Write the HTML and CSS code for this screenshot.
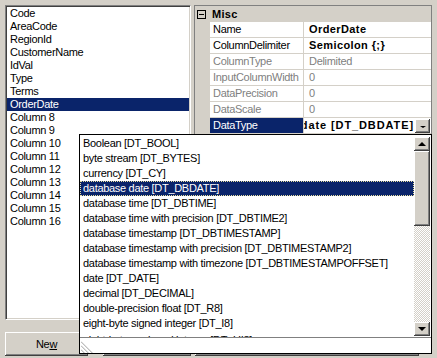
FILE: index.html
```html
<!DOCTYPE html>
<html lang="en">
<head>
    <meta charset="UTF-8">
    <title>Column Properties</title>
    <link rel="stylesheet" href="styles.css">
</head>
<body>
    <div class="dialog">
        <div class="panes">
            <ul class="listbox">
                <li>Code</li>
                <li>AreaCode</li>
                <li>RegionId</li>
                <li>CustomerName</li>
                <li>IdVal</li>
                <li>Type</li>
                <li>Terms</li>
                <li class="selected">OrderDate</li>
                <li>Column 8</li>
                <li>Column 9</li>
                <li>Column 10</li>
                <li>Column 11</li>
                <li>Column 12</li>
                <li>Column 13</li>
                <li>Column 14</li>
                <li>Column 15</li>
                <li>Column 16</li>
            </ul>

            <div class="grid">
                <div class="category">
                    <span class="toggle"></span>
                    <span class="category-name">Misc</span>
                </div>
                <div class="prop">
                    <div class="prop-name">Name</div>
                    <div class="prop-value bold">OrderDate</div>
                </div>
                <div class="prop">
                    <div class="prop-name">ColumnDelimiter</div>
                    <div class="prop-value bold">Semicolon {;}</div>
                </div>
                <div class="prop readonly">
                    <div class="prop-name">ColumnType</div>
                    <div class="prop-value">Delimited</div>
                </div>
                <div class="prop readonly">
                    <div class="prop-name">InputColumnWidth</div>
                    <div class="prop-value">0</div>
                </div>
                <div class="prop readonly">
                    <div class="prop-name">DataPrecision</div>
                    <div class="prop-value">0</div>
                </div>
                <div class="prop readonly">
                    <div class="prop-name">DataScale</div>
                    <div class="prop-value">0</div>
                </div>
                <div class="prop active">
                    <div class="prop-name">DataType</div>
                    <div class="prop-value bold editor">
                        <span class="editor-text">database date [DT_DBDATE]</span>
                        <span class="combo-btn"><i class="arrow-down small"></i></span>
                    </div>
                </div>
            </div>
        </div>

        <div class="buttons">
            <button class="btn btn-new">Ne<u>w</u></button>
            <button class="btn btn-remove"></button>
            <button class="btn btn-wide"></button>
        </div>

        <!-- lista desplegable del tipo de dato -->
        <div class="dropdown">
            <div class="dropdown-body">
                <ul class="dropdown-list">
                    <li>Boolean [DT_BOOL]</li>
                    <li>byte stream [DT_BYTES]</li>
                    <li>currency [DT_CY]</li>
                    <li class="selected">database date [DT_DBDATE]</li>
                    <li>database time [DT_DBTIME]</li>
                    <li>database time with precision [DT_DBTIME2]</li>
                    <li>database timestamp [DT_DBTIMESTAMP]</li>
                    <li>database timestamp with precision [DT_DBTIMESTAMP2]</li>
                    <li>database timestamp with timezone [DT_DBTIMESTAMPOFFSET]</li>
                    <li>date [DT_DATE]</li>
                    <li>decimal [DT_DECIMAL]</li>
                    <li>double-precision float [DT_R8]</li>
                    <li>eight-byte signed integer [DT_I8]</li>
                    <li class="partial">eight-byte unsigned integer [DT_UI8]</li>
                </ul>
                <div class="scrollbar">
                    <span class="sb-btn"><i class="arrow-up"></i></span>
                    <span class="sb-thumb"></span>
                    <span class="sb-track"></span>
                    <span class="sb-btn"><i class="arrow-down"></i></span>
                </div>
            </div>
            <div class="dropdown-footer">
                <svg class="grip" width="14" height="14" viewBox="0 0 14 14">
                    <path d="M0 2.5 L11.5 14 M0 6.5 L7.5 14 M0 10.5 L3.5 14" stroke="#808080" stroke-width="1"/>
                    <path d="M0 1.5 L12.5 14 M0 5.5 L8.5 14 M0 9.5 L4.5 14" stroke="#fff" stroke-width="1"/>
                </svg>
            </div>
        </div>
    </div>
</body>
</html>
```

FILE: styles.css
```css
body {
    margin: 0;
    background-color: #d4d0c8;
    font-family: "Liberation Sans", Arial, sans-serif;
    font-size: 11px;
    letter-spacing: -0.3px;
    color: #000;
}
ul {
    list-style: none;
    margin: 0;
    padding: 0;
}
.dialog {
    position: relative;
    width: 437px;
    height: 358px;
    overflow: hidden;
}
.panes {
    display: flex;
    gap: 3px;
    padding: 5px 0 0 5px;
}

/* lista de columnas */
.listbox {
    width: 182px;
    height: 311px;
    background-color: #fff;
    border: 1px solid;
    border-color: #808080 #fff #fff #808080;
    box-shadow: inset 1px 1px #404040, inset -1px -1px #d4d0c8;
    padding: 1px;
    overflow: hidden;
}
.listbox li {
    height: 13px;
    line-height: 13px;
    padding-left: 3px;
    white-space: nowrap;
}
.listbox li.selected {
    background-color: #0a246a;
    color: #fff;
}

/* cuadricula de propiedades */
.grid {
    width: 236px;
    height: 314px;
    background-color: #d4d0c8;
    border: 1px solid #808080;
    border-bottom: none;
}
.category {
    display: flex;
    align-items: center;
    height: 16px;
}
.toggle {
    position: relative;
    width: 7px;
    height: 7px;
    margin: 0 6px 0 2px;
    border: 1px solid #000;
    background-color: #d4d0c8;
}
.toggle::after {
    content: "";
    position: absolute;
    left: 1px;
    top: 3px;
    width: 5px;
    height: 1px;
    background-color: #000;
}
.category-name {
    font-weight: bold;
    letter-spacing: 0.3px;
}
.prop {
    display: flex;
    height: 16px;
    margin-left: 15px;
}
.prop-name,
.prop-value {
    height: 15px;
    line-height: 15px;
    background-color: #fff;
    border-bottom: 1px solid #d4d0c8;
    white-space: nowrap;
    overflow: hidden;
}
.prop-name {
    width: 90px;
    padding-left: 3px;
    border-right: 1px solid #d4d0c8;
}
.prop-value {
    flex: 1;
    padding-left: 5px;
}
.bold {
    font-weight: bold;
    letter-spacing: 0.4px;
}
.readonly .prop-name,
.readonly .prop-value {
    color: #808080;
}
.active .prop-name {
    background-color: #0a246a;
    color: #fff;
}
.editor {
    display: flex;
    justify-content: flex-end;
    align-items: center;
    padding-left: 0;
    padding-right: 1px;
}
.editor-text {
    flex-shrink: 0;
    margin-right: 1px;
    letter-spacing: 0.9px;
}
.combo-btn {
    flex-shrink: 0;
    display: flex;
    align-items: center;
    justify-content: center;
    width: 15px;
    height: 14px;
    background-color: #d4d0c8;
    box-shadow: inset -1px -1px #404040, inset 1px 1px #fff, inset -2px -2px #808080;
}

/* botones */
.buttons {
    display: flex;
    padding: 12px 0 0 5px;
}
.btn {
    height: 24px;
    padding: 0;
    border: none;
    background-color: #d4d0c8;
    font: inherit;
    letter-spacing: inherit;
    box-shadow: inset -1px -1px #404040, inset 1px 1px #fff, inset -2px -2px #808080, inset 2px 2px #d4d0c8;
}
.btn-new {
    width: 83px;
}
.btn-remove {
    width: 88px;
    margin-left: 15px;
}
.btn-wide {
    width: 224px;
    margin-left: 4px;
}

/* desplegable */
.dropdown {
    position: absolute;
    left: 79px;
    top: 134px;
    width: 351px;
    height: 218px;
    border: 1px solid #000;
    background-color: #fff;
}
.dropdown-body {
    display: flex;
    height: 202px;
    border-bottom: 1px solid #808080;
}
.dropdown-list {
    flex: 1;
    padding-top: 1px;
    overflow: hidden;
}
.dropdown-list li {
    height: 15px;
    line-height: 15px;
    padding-left: 3px;
    white-space: nowrap;
}
.dropdown-list li.partial {
    padding-top: 2px;
}
.dropdown-list li.selected {
    background-color: #0a246a;
    color: #fff;
    outline: 1px dotted #e8e0a0;
    outline-offset: -1px;
}
.scrollbar {
    display: flex;
    flex-direction: column;
    width: 16px;
    padding: 2px 1px 1px 0;
}
.sb-btn,
.sb-thumb {
    display: flex;
    align-items: center;
    justify-content: center;
    background-color: #d4d0c8;
    box-shadow: inset -1px -1px #404040, inset 1px 1px #fff, inset -2px -2px #808080;
}
.sb-btn {
    height: 14px;
}
.sb-thumb {
    height: 75px;
}
.sb-track {
    flex: 1;
    background: repeating-conic-gradient(#d4d0c8 0 25%, #fff 0 50%) 0 0 / 2px 2px;
}
.arrow-up,
.arrow-down {
    width: 0;
    height: 0;
    border-left: 4px solid transparent;
    border-right: 4px solid transparent;
}
.arrow-up {
    border-bottom: 4px solid #000;
}
.arrow-down {
    border-top: 4px solid #000;
}
.arrow-down.small {
    border-left-width: 3px;
    border-right-width: 3px;
    border-top-width: 2px;
    margin-top: 2px;
}
.dropdown-footer {
    height: 15px;
    display: flex;
    align-items: flex-end;
}
.grip {
    display: block;
    margin-left: 1px;
}
```
